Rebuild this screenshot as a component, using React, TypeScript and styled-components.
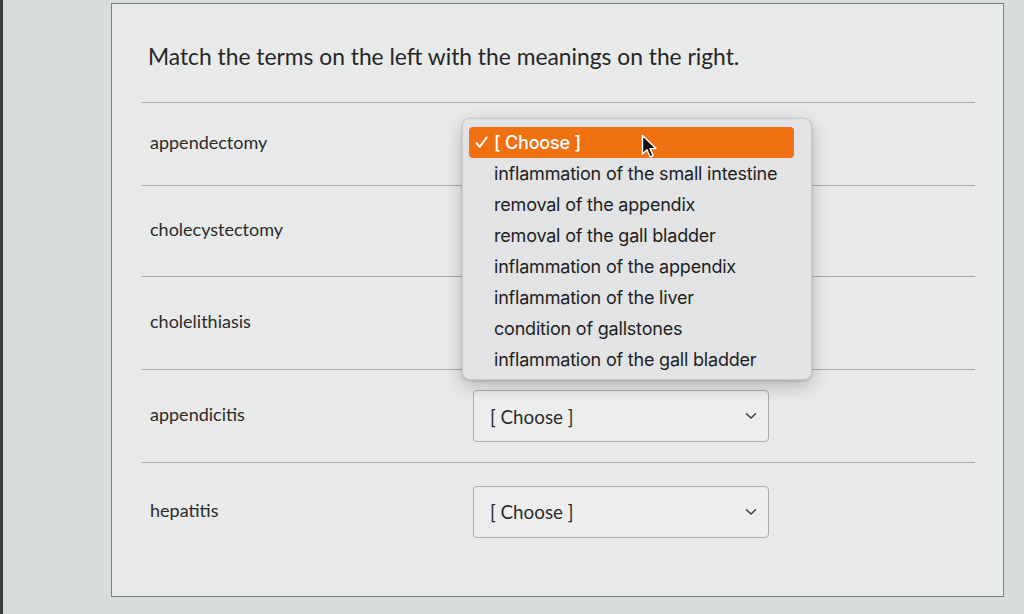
import React from "react";
import styled, { createGlobalStyle } from "styled-components";

const Global = createGlobalStyle`
  html, body { margin: 0; padding: 0; }
  body {
    width: 1024px;
    height: 614px;
    overflow: hidden;
    background: #d9dcdd;
    font-family: Lato, "Open Sans", sans-serif;
    color: #2b2b2b;
  }
`;

const Screen = styled.div`
  position: relative;
  width: 1024px;
  height: 614px;
  display: flex;
  border-left: 3px solid #3a3c3e;
  box-sizing: border-box;
`;

const Panel = styled.section`
  margin: 3px 0 0 108px;
  width: 893px;
  height: 594px;
  box-sizing: border-box;
  background: #e8eaea;
  border: 1.5px solid #7d7f81;
  padding: 0 28px 0 30px;
  display: flex;
  flex-direction: column;
`;

const Title = styled.h1`
  margin: 0;
  height: 98px;
  flex: none;
  display: flex;
  align-items: center;
  padding: 6px 0 0 6px;
  box-sizing: border-box;
  font-size: 22.8px;
  font-weight: 400;
  color: #262626;
`;

const Row = styled.div<{ $h: number }>`
  height: ${(p) => p.$h}px;
  flex: none;
  box-sizing: border-box;
  border-top: 1.5px solid #a7a9aa;
  display: grid;
  grid-template-columns: 323px 1fr;
  align-items: center;
  padding-left: 8px;
`;

const Term = styled.div`
  font-size: 18px;
  line-height: 22px;
  padding-bottom: 4px;
  color: #2b2b2b;
`;

const SelectWrap = styled.div`
  position: relative;
  width: 296px;
  height: 52px;
`;

const SelectBox = styled.div<{ $open?: boolean }>`
  box-sizing: border-box;
  width: 100%;
  height: 100%;
  border: 1.5px solid #a9abac;
  border-radius: 4px;
  background: #eceeee;
  display: flex;
  align-items: center;
  justify-content: space-between;
  padding: 0 11px 0 16px;
  font-size: 18.8px;
  color: #2b2b2b;
  & > * {
    visibility: ${(p) => (p.$open ? "hidden" : "visible")};
  }
`;

const Menu = styled.div`
  position: absolute;
  left: -11px;
  top: 0;
  width: 350px;
  box-sizing: border-box;
  padding: 8px 17px 4px 6px;
  background: #e2e3e4;
  border: 1px solid #c7c9ca;
  border-radius: 8px;
  box-shadow: 0 6px 18px rgba(0, 0, 0, 0.22), 0 1px 3px rgba(0, 0, 0, 0.15);
  font-family: Inter, "Noto Sans", sans-serif;
  z-index: 2;
`;

const Item = styled.div<{ $on?: boolean }>`
  height: 31px;
  display: flex;
  align-items: center;
  padding-left: 6px;
  position: relative;
  border-radius: 4px;
  font-size: 18px;
  letter-spacing: -0.2px;
  white-space: nowrap;
  color: ${(p) => (p.$on ? "#ffffff" : "#1e1e1e")};
  background: ${(p) => (p.$on ? "#ef7112" : "transparent")};
  font-weight: ${(p) => (p.$on ? 500 : 400)};
`;

const CheckSlot = styled.span`
  width: 19px;
  flex: none;
  display: flex;
  align-items: center;
`;

const Cursor = styled.svg`
  position: absolute;
  left: 172px;
  top: 7px;
`;

const Chevron = () => (
  <svg width="12" height="8" viewBox="0 0 12 8">
    <path d="M1.5 1.8 L6 6 L10.5 1.8" fill="none" stroke="#3a3a3a" strokeWidth="1.4" strokeLinecap="round" strokeLinejoin="round" />
  </svg>
);

const CheckMark = () => (
  <svg width="13" height="13" viewBox="0 0 13 13">
    <path d="M1.6 7.2 L4.6 11 L11.6 1.6" fill="none" stroke="#ffffff" strokeWidth="2" strokeLinecap="round" strokeLinejoin="round" />
  </svg>
);

const options = [
  "inflammation of the small intestine",
  "removal of the appendix",
  "removal of the gall bladder",
  "inflammation of the appendix",
  "inflammation of the liver",
  "condition of gallstones",
  "inflammation of the gall bladder",
];

const terms = ["appendectomy", "cholecystectomy", "cholelithiasis", "appendicitis", "hepatitis"];
const heights = [83, 91, 93, 93, 98];

export default function App() {
  return (
    <>
      <Global />
      <Screen>
        <Panel>
          <Title>Match the terms on the left with the meanings on the right.</Title>
          {terms.map((t, i) => (
            <Row key={t} $h={heights[i]}>
              <Term>{t}</Term>
              {i === 0 ? (
                <SelectWrap>
                  <SelectBox $open>
                    <span>[ Choose ]</span>
                    <Chevron />
                  </SelectBox>
                  <Menu>
                    <Item $on>
                      <CheckSlot>
                        <CheckMark />
                      </CheckSlot>
                      <span>[ Choose ]</span>
                      <Cursor width="18" height="26" viewBox="0 0 18 26">
                        <path d="M1.5 1.5 L1.5 20 L6 15.8 L9.2 23 L12.2 21.7 L9.1 14.6 L15 14.6 Z" fill="#111" stroke="#fff" strokeWidth="1.4" strokeLinejoin="round" />
                      </Cursor>
                    </Item>
                    {options.map((o) => (
                      <Item key={o}>
                        <CheckSlot />
                        <span>{o}</span>
                      </Item>
                    ))}
                  </Menu>
                </SelectWrap>
              ) : i >= 3 ? (
                <SelectWrap>
                  <SelectBox>
                    <span>[ Choose ]</span>
                    <Chevron />
                  </SelectBox>
                </SelectWrap>
              ) : (
                <span />
              )}
            </Row>
          ))}
        </Panel>
      </Screen>
    </>
  );
}
